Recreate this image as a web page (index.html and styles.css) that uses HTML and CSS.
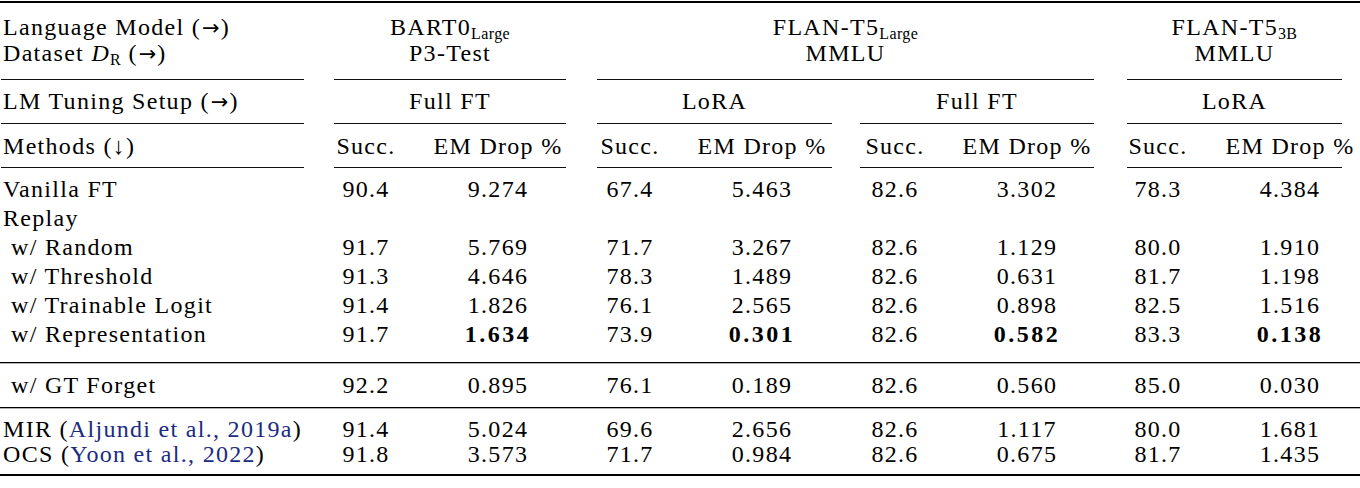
FILE: index.html
```html
<!DOCTYPE html>
<html lang="en">
<head>
<meta charset="utf-8">
<title>Results table</title>
<link rel="stylesheet" href="styles.css">
</head>
<body>
<div class="tbl">
  <div class="toprule"></div>

  <div class="sec head1">
    <div class="lab">Language Model (<span class="ar">→</span>)</div>
    <div class="grp bart">BART0<sub class="s">Large</sub></div>
    <div class="grp flanl">FLAN-T5<sub class="s">Large</sub></div>
    <div class="grp t3b">FLAN-T5<sub class="s">3B</sub></div>
    <div class="lab">Dataset <i>D</i><sub class="s">R</sub> (<span class="ar">→</span>)</div>
    <div class="grp bart">P3-Test</div>
    <div class="grp flanl">MMLU</div>
    <div class="grp t3b">MMLU</div>
  </div>
  <div class="rules">
    <div class="r r-lab"></div>
    <div class="r r-bart"></div>
    <div class="r r-flanl"></div>
    <div class="r r-t3b"></div>
  </div>

  <div class="sec head2">
    <div class="lab">LM Tuning Setup (<span class="ar">→</span>)</div>
    <div class="grp bart">Full FT</div>
    <div class="grp lora">LoRA</div>
    <div class="grp full">Full FT</div>
    <div class="grp t3b">LoRA</div>
  </div>
  <div class="rules">
    <div class="r r-lab"></div>
    <div class="r r-bart"></div>
    <div class="r r-lora"></div>
    <div class="r r-full"></div>
    <div class="r r-t3b"></div>
  </div>

  <div class="sec head3">
    <div class="lab">Methods (↓)</div>
    <div>Succ.</div><div>EM Drop %</div>
    <div>Succ.</div><div>EM Drop %</div>
    <div>Succ.</div><div>EM Drop %</div>
    <div>Succ.</div><div class="x">EM Drop %</div>
  </div>
  <div class="rules">
    <div class="r r-lab"></div>
    <div class="r r-bart"></div>
    <div class="r r-lora"></div>
    <div class="r r-full"></div>
    <div class="r r-t3b"></div>
  </div>

  <div class="sec body b1">
    <div class="lab">Vanilla FT</div>
    <div>90.4</div><div>9.274</div><div>67.4</div><div>5.463</div><div>82.6</div><div>3.302</div><div>78.3</div><div class="x">4.384</div>
    <div class="lab">Replay</div>
    <div class="lab sub">w/ Random</div>
    <div>91.7</div><div>5.769</div><div>71.7</div><div>3.267</div><div>82.6</div><div>1.129</div><div>80.0</div><div class="x">1.910</div>
    <div class="lab sub">w/ Threshold</div>
    <div>91.3</div><div>4.646</div><div>78.3</div><div>1.489</div><div>82.6</div><div>0.631</div><div>81.7</div><div class="x">1.198</div>
    <div class="lab sub">w/ Trainable Logit</div>
    <div>91.4</div><div>1.826</div><div>76.1</div><div>2.565</div><div>82.6</div><div>0.898</div><div>82.5</div><div class="x">1.516</div>
    <div class="lab sub">w/ Representation</div>
    <div>91.7</div><div class="b">1.634</div><div>73.9</div><div class="b">0.301</div><div>82.6</div><div class="b">0.582</div><div>83.3</div><div class="x b">0.138</div>
  </div>
  <div class="midrule"></div>

  <div class="sec body b2">
    <div class="lab sub">w/ GT Forget</div>
    <div>92.2</div><div>0.895</div><div>76.1</div><div>0.189</div><div>82.6</div><div>0.560</div><div>85.0</div><div class="x">0.030</div>
  </div>
  <div class="midrule"></div>

  <div class="sec body b3">
    <div class="lab">MIR (<a class="cite" href="#">Aljundi et al., 2019a</a>)</div>
    <div>91.4</div><div>5.024</div><div>69.6</div><div>2.656</div><div>82.6</div><div>1.117</div><div>80.0</div><div class="x">1.681</div>
    <div class="lab">OCS (<a class="cite" href="#">Yoon et al., 2022</a>)</div>
    <div>91.8</div><div>3.573</div><div>71.7</div><div>0.984</div><div>82.6</div><div>0.675</div><div>81.7</div><div class="x">1.435</div>
  </div>
  <div class="bottomrule"></div>
</div>
</body>
</html>
```

FILE: styles.css
```css
body {
  margin: 0;
  background: #fff;
  color: #000;
  font-family: "Liberation Serif", "Times New Roman", serif;
  font-size: 24px;
  letter-spacing: 1.3px;
}

.tbl {
  width: 1360px;
}

.sec,
.rules {
  display: grid;
  grid-template-columns: 330px 72px 192px 72px 192px 74px 190px 72px 166px;
}

.sec > div {
  text-align: center;
  white-space: nowrap;
  line-height: 26px;
}

.sec > .lab {
  grid-column: 1;
  text-align: left;
  padding-left: 3px;
}

.sec > .sub {
  padding-left: 11px;
}

.sec > .x {
  padding-left: 26px;
}

.b {
  font-weight: bold;
  letter-spacing: 2.5px;
}

.s {
  font-size: 16px;
  line-height: 0;
  vertical-align: -4px;
  letter-spacing: 0.4px;
}

.ar {
  font-family: "DejaVu Sans", sans-serif;
  font-size: 21px;
  line-height: 0;
  letter-spacing: 0;
  padding: 0 1px;
}

/* group header cells, centred over their cmidrule */
.grp.bart  { grid-column: 2 / span 2; padding: 0 28px 0 4px; }
.grp.flanl { grid-column: 4 / span 4; padding: 0 28px 0 3px; }
.grp.lora  { grid-column: 4 / span 2; padding: 0 26px 0 3px; }
.grp.full  { grid-column: 6 / span 2; padding: 0 28px 0 2px; }
.grp.t3b   { grid-column: 8 / span 2; padding: 0 18px 0 5px; }

/* rules */
.toprule {
  height: 2px;
  margin-top: 1px;
  background: #000;
}

.bottomrule {
  height: 2px;
  background: #000;
}

.midrule {
  height: 1px;
  background: #000;
  box-shadow: 0 1px 0 rgba(0, 0, 0, 0.3);
}

.rules {
  height: 1px;
}

.r {
  background: #111;
}

.r-lab   { grid-column: 1; margin: 0 26px 0 1px; }
.r-bart  { grid-column: 2 / span 2; margin: 0 28px 0 4px; }
.r-flanl { grid-column: 4 / span 4; margin: 0 28px 0 3px; }
.r-lora  { grid-column: 4 / span 2; margin: 0 26px 0 3px; }
.r-full  { grid-column: 6 / span 2; margin: 0 28px 0 2px; }
.r-t3b   { grid-column: 8 / span 2; margin: 0 18px 0 5px; }

/* section spacing */
.head1 { padding: 11px 0 13px; }
.head2 { padding: 8px 0 9px; }
.head3 { padding: 9px 0 8px; }

.b1 { padding: 7px 0 13px; }
.b1 > div { line-height: 29px; }

.b2 { padding: 9px 0 9px; }

.b3 { padding: 9px 0 7px; }
.b3 > div { line-height: 25px; }

.cite {
  color: #1c2b80;
  text-decoration: none;
}
```
